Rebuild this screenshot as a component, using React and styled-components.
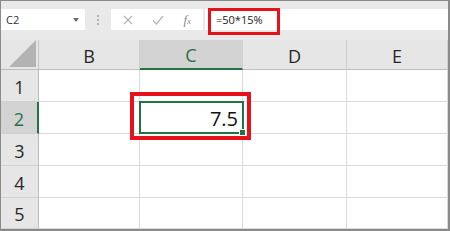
import styled, { createGlobalStyle } from "styled-components";

const GlobalStyle = createGlobalStyle`
  body {
    margin: 0;
    background: #ffffff;
  }
`;

const columns = ["B", "C", "D", "E"];
const rows = [1, 2, 3, 4, 5];
const selected = { col: "C", row: 2 };

const App = () => {
  return (
    <>
      <GlobalStyle />
      <Frame>
        <FormulaBar>
          <NameBox>
            <span>C2</span>
            <Caret />
          </NameBox>

          <Grip>
            <Dot />
            <Dot />
            <Dot />
          </Grip>

          <FuncBox>
            <svg width="10" height="10" viewBox="0 0 10 10">
              <path d="M1 1 L9 9 M9 1 L1 9" stroke="#b5b5b5" strokeWidth="1.2" fill="none" />
            </svg>
            <svg width="12" height="10" viewBox="0 0 12 10">
              <path d="M1 5.5 L4.5 9 L11 1" stroke="#b5b5b5" strokeWidth="1.2" fill="none" />
            </svg>
            <Fx>
              f<small>x</small>
            </Fx>
          </FuncBox>

          <FormulaInput>
            =50*15%
            <Highlight $top={-1} $left={3} $width={72} $height={27} $thick={3} />
          </FormulaInput>
        </FormulaBar>

        <Grid>
          <Corner>
            <svg width="27" height="27" viewBox="0 0 27 27">
              <polygon points="27,0 27,27 0,27" fill="#b3b3b3" />
            </svg>
          </Corner>

          {columns.map(col => (
            <ColHeader key={col} $active={col === selected.col}>
              {col}
            </ColHeader>
          ))}

          {rows.map(row => (
            <Row key={row}>
              <RowHeader $active={row === selected.row}>{row}</RowHeader>
              {columns.map(col => {
                const isSelected = col === selected.col && row === selected.row;
                return (
                  <Cell key={col + row}>
                    {isSelected && (
                      <>
                        <Value>7.5</Value>
                        <Selection>
                          <Handle />
                        </Selection>
                        <Highlight $top={-10} $left={-10} $width={121} $height={48} $thick={4} />
                      </>
                    )}
                  </Cell>
                );
              })}
            </Row>
          ))}
        </Grid>
      </Frame>
    </>
  );
};

export default App;

const Frame = styled.div`
  width: 450px;
  height: 231px;
  box-sizing: border-box;
  border: 1px solid #8a8a8a;
  border-right-width: 2px;
  border-bottom-width: 2px;
  display: flex;
  flex-direction: column;
  background: #ffffff;
  overflow: hidden;
  font-family: "Open Sans", "Noto Sans", sans-serif;
`;

const FormulaBar = styled.div`
  height: 39px;
  flex-shrink: 0;
  background: #e9e9e9;
  display: flex;
  align-items: flex-start;
  padding-top: 8px;
  box-sizing: border-box;
`;

const NameBox = styled.div`
  width: 84px;
  height: 21px;
  background: #ffffff;
  display: flex;
  align-items: center;
  justify-content: space-between;
  padding: 0 6px 0 5px;
  box-sizing: border-box;
  font-family: "Open Sans", "Liberation Sans", sans-serif;
  font-size: 11px;
  color: #333333;
`;

const Caret = styled.span`
  width: 0;
  height: 0;
  border-left: 3px solid transparent;
  border-right: 3px solid transparent;
  border-top: 4px solid #6a6a6a;
`;

const Grip = styled.div`
  width: 26px;
  height: 21px;
  display: flex;
  flex-direction: column;
  align-items: center;
  justify-content: center;
  gap: 2px;
`;

const Dot = styled.span`
  width: 2px;
  height: 2px;
  background: #b0b0b0;
`;

const FuncBox = styled.div`
  width: 92px;
  height: 21px;
  background: #ffffff;
  display: flex;
  align-items: center;
  justify-content: space-between;
  padding: 0 12px 0 12px;
  box-sizing: border-box;
`;

const Fx = styled.span`
  font-family: "Liberation Serif", serif;
  font-style: italic;
  font-size: 13px;
  color: #8a8a8a;
  line-height: 1;

  small {
    font-size: 9px;
  }
`;

const FormulaInput = styled.div`
  position: relative;
  flex: 1;
  height: 21px;
  margin-left: 2px;
  background: #ffffff;
  display: flex;
  align-items: center;
  padding-left: 11px;
  font-family: "Open Sans", "Liberation Sans", sans-serif;
  font-size: 11px;
  color: #222222;
`;

const Highlight = styled.div`
  position: absolute;
  top: ${props => props.$top}px;
  left: ${props => props.$left}px;
  width: ${props => props.$width}px;
  height: ${props => props.$height}px;
  box-sizing: border-box;
  border: ${props => props.$thick}px solid #e5121b;
  pointer-events: none;
  z-index: 3;
`;

const Grid = styled.div`
  flex: 1;
  display: grid;
  grid-template-columns: 38px 101px 103px 104px 1fr;
  grid-template-rows: 30px 32px 32px 32px 32px 1fr;
`;

const Corner = styled.div`
  background: #e6e6e6;
  border-right: 1px solid #c4c4c4;
  border-bottom: 1px solid #bdbdbd;
  display: flex;
  align-items: flex-end;
  justify-content: flex-end;
  padding: 0 2px 2px 0;
`;

const ColHeader = styled.div`
  background: ${props => (props.$active ? "#d3d3d3" : "#e6e6e6")};
  color: ${props => (props.$active ? "#217346" : "#262626")};
  border-right: 1px solid #cfcfcf;
  border-bottom: ${props => (props.$active ? "2px solid #217346" : "1px solid #bdbdbd")};
  display: flex;
  align-items: center;
  justify-content: center;
  font-size: 18px;
  padding-top: 2px;
`;

const Row = styled.div`
  display: contents;
`;

const RowHeader = styled.div`
  background: ${props => (props.$active ? "#d3d3d3" : "#e6e6e6")};
  color: ${props => (props.$active ? "#217346" : "#262626")};
  border-right: ${props => (props.$active ? "2px solid #217346" : "1px solid #bdbdbd")};
  border-bottom: 1px solid #d0d0d0;
  display: flex;
  align-items: center;
  justify-content: center;
  font-size: 18px;
  padding-top: 2px;
`;

const Cell = styled.div`
  position: relative;
  border-right: 1px solid #dadada;
  border-bottom: 1px solid #dadada;
  display: flex;
  align-items: center;
  justify-content: flex-end;
  padding-right: 4px;
`;

const Value = styled.span`
  font-size: 20px;
  color: #111111;
  padding-top: 2px;
`;

const Selection = styled.div`
  position: absolute;
  top: -1px;
  left: -1px;
  right: -2px;
  bottom: -1px;
  border: 2px solid #217346;
  z-index: 2;
`;

const Handle = styled.span`
  position: absolute;
  right: -4px;
  bottom: -4px;
  width: 5px;
  height: 5px;
  background: #217346;
  border: 1px solid #ffffff;
`;
